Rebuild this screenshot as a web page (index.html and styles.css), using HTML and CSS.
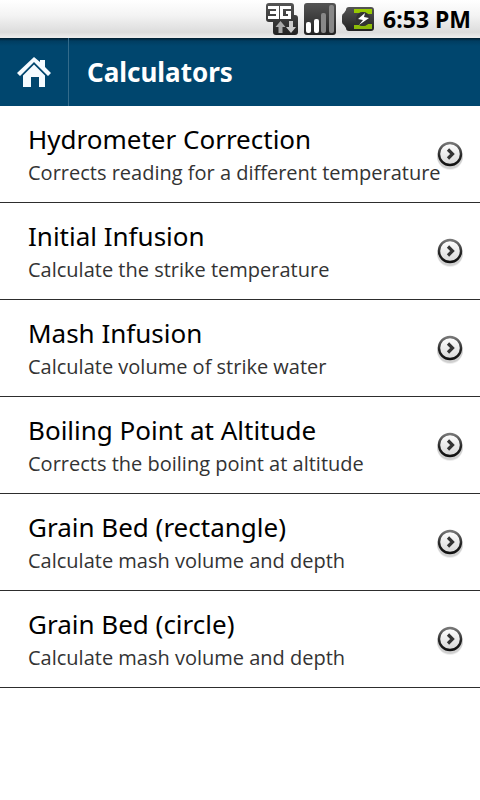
FILE: index.html
```html
<!DOCTYPE html>
<html lang="en">
<head>
<meta charset="utf-8">
<meta name="viewport" content="width=device-width, initial-scale=1">
<title>Calculators</title>
<link rel="stylesheet" href="styles.css">
</head>
<body>
<svg class="defs" width="0" height="0" aria-hidden="true">
  <defs>
    <linearGradient id="ring" x1="0" y1="0" x2="0" y2="1"><stop offset="0" stop-color="#777"/><stop offset=".6" stop-color="#222"/><stop offset="1" stop-color="#111"/></linearGradient>
    <linearGradient id="face" x1="0" y1="0" x2="0" y2="1"><stop offset="0" stop-color="#fff"/><stop offset="1" stop-color="#d8d8d8"/></linearGradient>
    <linearGradient id="dark" x1="0" y1="0" x2="0" y2="1"><stop offset="0" stop-color="#555"/><stop offset="1" stop-color="#222"/></linearGradient>
    <linearGradient id="green" x1="0" y1="0" x2="0" y2="1"><stop offset="0" stop-color="#9c0"/><stop offset="1" stop-color="#8ab80a"/></linearGradient>
    <symbol id="go" viewBox="0 -1 32 34">
      <circle cx="16" cy="18" r="13" fill="#000" opacity=".07"/>
      <circle cx="16" cy="17" r="13" fill="#000" opacity=".12"/>
      <circle cx="16" cy="15" r="11" fill="url(#face)" stroke="url(#ring)" stroke-width="2.4"/>
      <path d="M14 10.500l4.500 4.500-4.500 4.500" fill="none" stroke="#333" stroke-width="3.200"/>
    </symbol>
  </defs>
</svg>
<div class="status">
  <svg width="34" height="34" viewBox="0 0 34 34" role="img" aria-label="3G data">
    <path d="M4 1h22q3 0 3 3v9h1q3 0 3 3v14q0 3-3 3H11q-3 0-3-3V20H4q-3 0-3-3V4q0-3 3-3z" fill="url(#dark)"/>
    <path d="M3 4h11v13H3v-3h8v-2H5V9h6V7H3zM15 4h11v3h-8v7h5v-2h-2V9h5v8H15z" fill="#fff"/>
    <path d="M15.500 19l5 6h-3v6h-4v-6h-3z" fill="#aaa"/>
    <path d="M24 19h4v6h3l-5 6-5-6h3z" fill="#ccc"/>
  </svg>
  <svg width="34" height="34" viewBox="0 0 34 34" role="img" aria-label="Signal strength">
    <rect x="1" y="1" width="32" height="32" rx="3" fill="url(#dark)"/>
    <rect x="3" y="20" width="5" height="11" rx="2" fill="#fff"/>
    <rect x="11" y="17" width="5" height="14" rx="2" fill="#fff"/>
    <rect x="18" y="11" width="5" height="20" rx="2" fill="#888"/>
    <rect x="26" y="3" width="5" height="28" rx="2" fill="#888"/>
  </svg>
  <svg width="34" height="34" viewBox="0 0 34 34" role="img" aria-label="Battery charging">
    <path d="M8 5h22q3 0 3 3v18q0 3-3 3H8q-3 0-3-3l-2-3q-2-1-2-3v-6q0-2 2-3l2-3q0-3 3-3z" fill="url(#dark)"/>
    <path d="M13 7h18v5h-4a8 8 0 0 0-9-1h-5zM13 23h5a8 8 0 0 0 9-1h4v5H13z" fill="url(#green)"/>
    <circle cx="22" cy="17" r="7" fill="#333"/>
    <path d="M24 11l-7 6 5 1-4 5 10-7-5-1z" fill="#fff"/>
  </svg>
  <time class="clock">6:53 PM</time>
</div>
<header class="bar">
  <a class="home" href="#" aria-label="Home">
    <svg width="34" height="32" viewBox="0 0 34 32" aria-hidden="true">
      <path d="M17 1l6 5V4h5v7l6 6-3 3L17 6 3 20l-3-3z" fill="#f5fbff"/>
      <path d="M17 8.500l11 11V31h-6V21h-8v10H6V19.500z" fill="#f5fbff"/>
    </svg>
  </a>
  <h1 class="heading">Calculators</h1>
</header>
<main>
  <ul class="list">
    <li><a class="row" href="#"><span class="text"><span class="title">Hydrometer Correction</span><span class="note">Corrects reading for a different temperature</span></span><svg class="go" aria-hidden="true"><use href="#go"/></svg></a></li>
    <li><a class="row" href="#"><span class="text"><span class="title">Initial Infusion</span><span class="note">Calculate the strike temperature</span></span><svg class="go" aria-hidden="true"><use href="#go"/></svg></a></li>
    <li><a class="row" href="#"><span class="text"><span class="title">Mash Infusion</span><span class="note">Calculate volume of strike water</span></span><svg class="go" aria-hidden="true"><use href="#go"/></svg></a></li>
    <li><a class="row" href="#"><span class="text"><span class="title">Boiling Point at Altitude</span><span class="note">Corrects the boiling point at altitude</span></span><svg class="go" aria-hidden="true"><use href="#go"/></svg></a></li>
    <li><a class="row" href="#"><span class="text"><span class="title">Grain Bed (rectangle)</span><span class="note">Calculate mash volume and depth</span></span><svg class="go" aria-hidden="true"><use href="#go"/></svg></a></li>
    <li><a class="row" href="#"><span class="text"><span class="title">Grain Bed (circle)</span><span class="note">Calculate mash volume and depth</span></span><svg class="go" aria-hidden="true"><use href="#go"/></svg></a></li>
  </ul>
</main>
</body>
</html>
```
FILE: styles.css
```css
* { box-sizing: border-box; }
body { margin: 0; background: #fff; color: #000; font-family: "Noto Sans", "Open Sans", sans-serif; }
.defs { position: absolute; }
.status {
  display: flex; align-items: center; justify-content: flex-end; gap: 4px;
  height: 38px; padding-right: 9px;
  background: linear-gradient(#fff, #f4f4f4 40%, #dcdcdc 85%, #eee);
}
.clock { margin-left: 4px; font-size: 23px; line-height: 32px; font-weight: 700; white-space: nowrap; }
.bar {
  display: flex; height: 68px; color: #fff;
  background: linear-gradient(#001c2e, #003d61 3px, #00466e 8px);
}
.home {
  display: flex; align-items: center; justify-content: center;
  width: 69px; border-right: 1px solid #336b8b;
}
.heading { margin: 0; padding-left: 18px; font-size: 26px; line-height: 68px; font-weight: 700; }
.list { margin: 0; padding: 0; list-style: none; }
.row {
  display: flex; align-items: center; justify-content: space-between;
  padding: 15px 14px 14px 28px; border-bottom: 1px solid #2d2d2d;
  color: inherit; text-decoration: none;
}
.text { display: flex; flex-direction: column; min-width: 0; white-space: nowrap; }
.title { font-size: 26px; line-height: 36px; }
.note { font-family: "Open Sans", "Noto Sans", sans-serif; font-size: 20px; line-height: 31px; color: #333; }
.go { flex: none; width: 32px; height: 34px; margin-left: -32px; }
```
